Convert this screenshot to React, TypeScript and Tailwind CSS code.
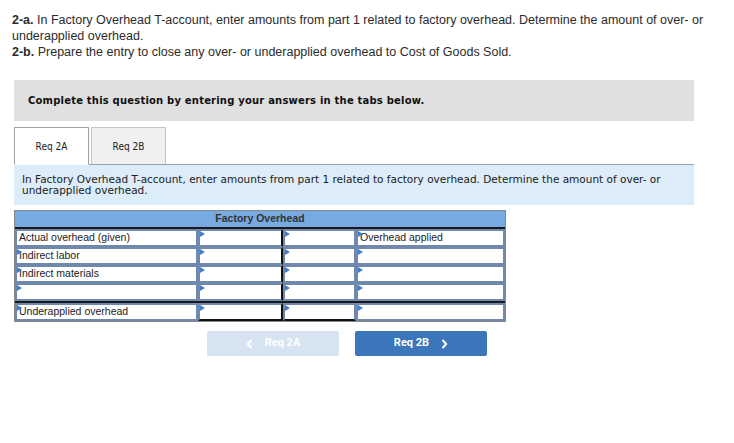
import React from 'react';

const Marker: React.FC = () => (
  <span className="absolute left-0 top-0 w-0 h-0 border-y-[3px] border-y-transparent border-l-[5px] border-l-[#3f7fcb]" />
);

interface CellProps {
  text?: string;
  marker?: boolean;
  className?: string;
}

const Cell: React.FC<CellProps> = ({ text, marker = true, className = '' }) => (
  <div className={`relative h-[18px] bg-white border-2 border-[#7088ab] flex items-center pl-[2px] text-[10.5px] text-[#222] overflow-hidden whitespace-nowrap ${className}`}>
    {marker && <Marker />}
    {text}
  </div>
);

const Chevron: React.FC<{ dir: 'left' | 'right' }> = ({ dir }) => (
  <svg width="7" height="10" viewBox="0 0 7 10" fill="none" stroke="currentColor" strokeWidth={2} strokeLinecap="round" strokeLinejoin="round">
    {dir === 'left' ? <path d="M5 1.5L1.8 5L5 8.5" /> : <path d="M2 1.5L5.2 5L2 8.5" />}
  </svg>
);

const rows: { left: string; leftMarker: boolean; right: string }[] = [
  { left: 'Actual overhead (given)', leftMarker: false, right: 'Overhead applied' },
  { left: 'Indirect labor', leftMarker: true, right: '' },
  { left: 'Indirect materials', leftMarker: true, right: '' },
  { left: '', leftMarker: true, right: '' },
];

export default function App() {
  return (
    <div className="w-[734px] h-[443px] bg-white overflow-hidden">
      <div className="pt-[12px] px-[12px] text-[12.5px] leading-[16px] text-[#2b2b2b] font-['Liberation_Sans',sans-serif]">
        <p>
          <b>2-a.</b> In Factory Overhead T-account, enter amounts from part 1 related to factory overhead. Determine the amount of over- or underapplied overhead.
        </p>
        <p>
          <b>2-b.</b> Prepare the entry to close any over- or underapplied overhead to Cost of Goods Sold.
        </p>
      </div>

      <div className="mx-[14px] mt-[20px] w-[680px]">
        <div className="h-[41px] bg-[#e0e0e0] flex items-center pl-[14px] font-['DejaVu_Sans',sans-serif] text-[10px] tracking-[0.2px] font-bold text-[#111]">
          Complete this question by entering your answers in the tabs below.
        </div>

        <div className="mt-[6px] flex items-end border-b border-[#a0a0a0] h-[38px] font-['DejaVu_Sans_Condensed','DejaVu_Sans',sans-serif] text-[10px] text-[#222]">
          <div className="w-[75px] h-[38px] bg-white border border-[#a0a0a0] border-b-white -mb-px flex items-center justify-center">Req 2A</div>
          <div className="ml-[2px] w-[75px] h-[37px] bg-[#f0f0f0] border border-[#c4c4c4] border-b-0 flex items-center justify-center">Req 2B</div>
        </div>

        <div className="h-[40px] bg-[#dcecf8] px-[8px] pt-[9px] font-['DejaVu_Sans',sans-serif] text-[10.5px] leading-[11px] text-[#222]">
          In Factory Overhead T-account, enter amounts from part 1 related to factory overhead. Determine the amount of over- or underapplied overhead.
        </div>

        <div className="mt-[5px] w-[492px] border border-[#888] font-['Liberation_Sans',sans-serif]">
          <div className="h-[18px] bg-[#78aae2] border-b-2 border-[#1a1a1a] flex items-center justify-center text-[10.5px] font-bold text-[#333]">
            Factory Overhead
          </div>
          {rows.map((r, i) => (
            <div key={i} className={`grid grid-cols-[183px_85px_73px_1fr] ${i === 3 ? 'border-b-2 border-[#1a1a1a]' : ''}`}>
              <Cell text={r.left} marker={r.leftMarker} />
              <Cell className="border-r-[#111]" />
              <Cell />
              <Cell text={r.right} marker />
            </div>
          ))}
          <div className="grid grid-cols-[183px_85px_73px_1fr]">
            <Cell text="Underapplied overhead" marker />
            <Cell className="border-r-[#111] border-b-[#111]" />
            <Cell className="border-b-[#111]" />
            <Cell />
          </div>
        </div>

        <div className="mt-[9px] ml-[193px] flex gap-[16px] font-['Roboto',sans-serif] text-[11px] font-bold text-white">
          <div className="w-[132px] h-[25px] rounded-[2px] bg-[#d6e3f1] flex items-center justify-center gap-[12px]">
            <Chevron dir="left" />
            <span>Req 2A</span>
          </div>
          <div className="w-[132px] h-[25px] rounded-[2px] bg-[#3a76b9] flex items-center justify-center gap-[12px]">
            <span>Req 2B</span>
            <Chevron dir="right" />
          </div>
        </div>
      </div>
    </div>
  );
}
